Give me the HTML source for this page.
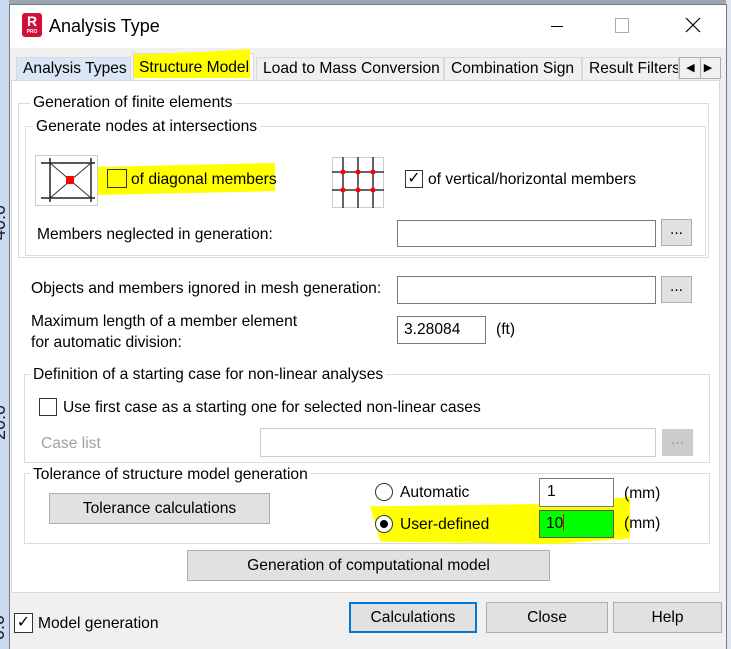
<!DOCTYPE html>
<html><head><meta charset="utf-8"><style>
*{box-sizing:border-box;margin:0;padding:0}
body{width:731px;height:649px;overflow:hidden;background:#f0f0f0;font-family:"Liberation Sans",sans-serif;font-size:15.6px;color:#000;position:relative}
.a{position:absolute;white-space:nowrap}
.box{position:absolute;border:1px solid #dcdcdc}
.lg{position:absolute;background:#fff;padding:0 3px;white-space:nowrap}
.inp{position:absolute;background:#fff;border:1px solid #7a7a7a}
.btn{position:absolute;background:#e1e1e1;border:1px solid #adadad;text-align:center}
.cb{position:absolute;width:18px;height:18px;border:1px solid #333;background:#fff}
.tab{position:absolute;top:57px;height:23px;border:1px solid #d9d9d9;border-bottom:none;background:#f0f0f0;padding:2px 0 0 6px;white-space:nowrap;overflow:hidden}
</style></head><body>
<div class="a" style="left:0;top:0;width:731px;height:6px;background:#9aa6b4"></div>
<div class="a" style="left:0;top:0;width:9px;height:649px;background:#c9d9f0"></div>
<div class="a" style="left:0;top:200px;width:9px;height:40px;overflow:hidden"><div style="position:absolute;left:-18px;top:12px;font-size:18px;transform:rotate(-90deg);color:#222">40.0</div></div>
<div class="a" style="left:0;top:400px;width:9px;height:40px;overflow:hidden"><div style="position:absolute;left:-18px;top:12px;font-size:18px;transform:rotate(-90deg);color:#222">20.0</div></div>
<div class="a" style="left:0;top:605px;width:9px;height:40px;overflow:hidden"><div style="position:absolute;left:-14px;top:12px;font-size:18px;transform:rotate(-90deg);color:#222">0.0</div></div>
<div class="a" style="left:726px;top:0;width:5px;height:649px;background:#dde6f2"></div>
<div class="a" style="left:9px;top:4px;width:718px;height:645px;background:#f0f0f0;border:1px solid #7a7a7a;border-bottom:none"></div>
<div class="a" style="left:10px;top:5px;width:716px;height:43px;background:#fff"></div>
<div class="a" style="left:22px;top:13px;width:20px;height:24px;background:#d0103a;border-radius:3px;color:#fff;font-weight:bold;font-size:14px;text-align:center;line-height:17px">R<div style="font-size:5px;line-height:5px">PRO</div></div>
<div class="a" style="left:49px;top:16px;font-size:18px">Analysis Type</div>
<div class="a" style="left:551px;top:26px;width:12px;height:1px;background:#000"></div>
<div class="a" style="left:615px;top:18px;width:14px;height:15px;border:1px solid #aaa"></div>
<svg class="a" style="left:685px;top:17px" width="16" height="16"><path d="M1 1L15 15M15 1L1 15" stroke="#000" stroke-width="1.2"/></svg>
<div class="tab" style="left:16px;width:115px;background:#d9e6f5">Analysis Types</div>
<div class="tab" style="left:133px;top:53px;height:28px;width:121px;background:#fff;padding-top:5px">Structure Model</div>
<div class="a" style="left:134px;top:49px;width:116px;height:29px;background:#ffff00;clip-path:polygon(0 18%,60% 10%,100% 0,100% 100%,0 100%)"></div>
<div class="a" style="left:139px;top:59px">Structure Model</div>
<div class="tab" style="left:256px;width:188px">Load to Mass Conversion</div>
<div class="tab" style="left:444px;width:138px">Combination Sign</div>
<div class="tab" style="left:582px;width:97px">Result Filters</div>
<div class="a" style="left:679px;top:57px;width:42px;height:22px;border:1px solid #adadad;background:#f0f0f0;font-size:11px;line-height:20px">&nbsp;&nbsp;◀&nbsp;&nbsp;&nbsp;▶</div>
<div class="a" style="left:700px;top:57px;width:1px;height:22px;background:#adadad"></div>
<div class="a" style="left:11px;top:80px;width:709px;height:513px;background:#fff;border:1px solid #d9d9d9"></div>
<div class="box" style="left:18px;top:103px;width:691px;height:155px"></div>
<div class="lg" style="left:30px;top:94px">Generation of finite elements</div>
<div class="box" style="left:25px;top:126px;width:681px;height:130px"></div>
<div class="lg" style="left:33px;top:118px">Generate nodes at intersections</div>
<svg class="a" style="left:35px;top:155px" width="63" height="51"><rect x="0.5" y="0.5" width="62" height="50" fill="#fff" stroke="#ccc"/><g stroke="#222" stroke-width="1.5"><line x1="15" y1="3" x2="15" y2="47"/><line x1="56" y1="3" x2="56" y2="47"/><line x1="6" y1="8" x2="60" y2="8"/><line x1="6" y1="43" x2="60" y2="43"/></g><g stroke="#333"><line x1="15" y1="8" x2="56" y2="43"/><line x1="56" y1="8" x2="15" y2="43"/></g><rect x="31" y="21" width="8" height="8" fill="#f00"/></svg>
<div class="a" style="left:98px;top:163px;width:177px;height:32px;background:#ffff00;clip-path:polygon(0 12%,100% 0,100% 88%,0 100%)"></div>
<div class="cb" style="left:107px;top:169px;width:20px;height:19px;background:transparent"></div>
<div class="a" style="left:131px;top:171px">of diagonal members</div>
<svg class="a" style="left:332px;top:157px" width="52" height="51"><rect x="0.5" y="0.5" width="51" height="50" fill="#fff" stroke="#ccc"/><g stroke="#333" stroke-width="1.5"><line x1="11" y1="0" x2="11" y2="51"/><line x1="26" y1="0" x2="26" y2="51"/><line x1="41" y1="0" x2="41" y2="51"/><line x1="0" y1="15" x2="52" y2="15"/><line x1="0" y1="33" x2="52" y2="33"/></g><g fill="#f00"><circle cx="11" cy="15" r="2.5"/><circle cx="26" cy="15" r="2.5"/><circle cx="41" cy="15" r="2.5"/><circle cx="11" cy="33" r="2.5"/><circle cx="26" cy="33" r="2.5"/><circle cx="41" cy="33" r="2.5"/></g></svg>
<div class="cb" style="left:405px;top:170px;font-size:16px;line-height:16px;text-align:center">✓</div>
<div class="a" style="left:428px;top:171px">of vertical/horizontal members</div>
<div class="a" style="left:37px;top:226px">Members neglected in generation:</div>
<div class="inp" style="left:397px;top:220px;width:259px;height:27px"></div>
<div class="btn" style="left:661px;top:219px;width:31px;height:27px;line-height:20px">...</div>
<div class="a" style="left:31px;top:280px">Objects and members ignored in mesh generation:</div>
<div class="inp" style="left:397px;top:276px;width:259px;height:28px"></div>
<div class="btn" style="left:661px;top:276px;width:31px;height:27px;line-height:20px">...</div>
<div class="a" style="left:31px;top:311px;line-height:21px">Maximum length of a member element<br>for automatic division:</div>
<div class="inp" style="left:397px;top:316px;width:89px;height:28px;padding:4px 0 0 6px">3.28084</div>
<div class="a" style="left:496px;top:321px">(ft)</div>
<div class="box" style="left:24px;top:374px;width:686px;height:89px"></div>
<div class="lg" style="left:30px;top:366px">Definition of a starting case for non-linear analyses</div>
<div class="cb" style="left:39px;top:398px"></div>
<div class="a" style="left:63px;top:399px">Use first case as a starting one for selected non-linear cases</div>
<div class="a" style="left:41px;top:435px;color:#a0a0a0">Case list</div>
<div class="inp" style="left:260px;top:428px;width:396px;height:29px;border-color:#ccc"></div>
<div class="btn" style="left:662px;top:429px;width:31px;height:27px;line-height:20px;background:#ccc;border-color:#ccc;color:#999">...</div>
<div class="box" style="left:24px;top:473px;width:686px;height:71px"></div>
<div class="lg" style="left:30px;top:466px">Tolerance of structure model generation</div>
<div class="btn" style="left:49px;top:493px;width:221px;height:31px;line-height:29px">Tolerance calculations</div>
<div class="a" style="left:370px;top:497px;width:260px;height:47px;background:#ffff00;clip-path:polygon(0 20%,65% 15%,100% 0,100% 88%,70% 100%,4% 95%)"></div>
<div class="a" style="left:375px;top:483px;width:18px;height:18px;border-radius:50%;border:1px solid #333;background:#fff"></div>
<div class="a" style="left:400px;top:484px">Automatic</div>
<div class="inp" style="left:539px;top:478px;width:75px;height:29px;padding:4px 0 0 7px">1</div>
<div class="a" style="left:624px;top:485px">(mm)</div>
<div class="a" style="left:375px;top:515px;width:18px;height:18px;border-radius:50%;border:1px solid #333;background:#fff"><div style="position:absolute;left:4px;top:4px;width:8px;height:8px;border-radius:50%;background:#000"></div></div>
<div class="a" style="left:400px;top:516px">User-defined</div>
<div class="inp" style="left:539px;top:510px;width:75px;height:28px;background:#00ff00;border-color:#5a5a2a;padding:3px 0 0 6px">10<span style="display:inline-block;width:1px;height:17px;background:#e00;vertical-align:-3px"></span></div>
<div class="a" style="left:624px;top:515px">(mm)</div>
<div class="btn" style="left:187px;top:550px;width:363px;height:31px;line-height:29px">Generation of computational model</div>
<div class="cb" style="left:14px;top:613px;width:19px;height:20px;font-size:16px;line-height:18px;text-align:center">✓</div>
<div class="a" style="left:38px;top:615px">Model generation</div>
<div class="btn" style="left:349px;top:602px;width:128px;height:31px;line-height:27px;border:2px solid #0078d7">Calculations</div>
<div class="btn" style="left:486px;top:602px;width:122px;height:31px;line-height:29px">Close</div>
<div class="btn" style="left:613px;top:602px;width:109px;height:31px;line-height:29px">Help</div>
</body></html>
